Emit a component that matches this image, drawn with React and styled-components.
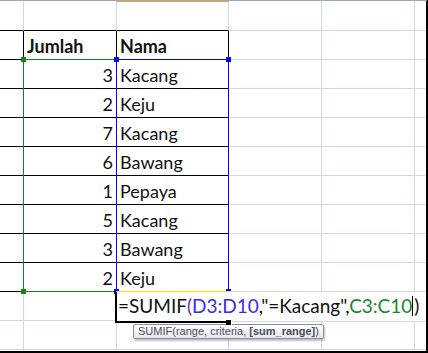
import React from 'react'
import styled, { createGlobalStyle } from 'styled-components'

const GRID = '#d0d7e5'
const GREEN = '#17861a'
const BLUE = '#0000ff'

const data = [
    [3, 'Kacang'],
    [2, 'Keju'],
    [7, 'Kacang'],
    [6, 'Bawang'],
    [1, 'Pepaya'],
    [5, 'Kacang'],
    [3, 'Bawang'],
    [2, 'Keju'],
]

const ROWS = 13
const COLS = 6

const cellText = (r, c) => {
    if (r === 1 && c === 1) return 'Jumlah'
    if (r === 1 && c === 2) return 'Nama'
    if (r >= 2 && r <= 9 && c >= 1 && c <= 2) return data[r - 2][c - 1]
    return ''
}

// coloured outline Excel draws round a range used in the formula
const RangeMark = ({ color, left, width }) => (
    <Range $color={color} $left={left} $width={width}>
        <Corner $color={color} $top $left />
        <Corner $color={color} $top />
        <Corner $color={color} $left />
        <Corner $color={color} />
    </Range>
)

const App = () => {
    const cells = []
    for (let r = 0; r < ROWS; r++) {
        for (let c = 0; c < COLS; c++) {
            cells.push(
                <Cell
                    key={r + '-' + c}
                    $darkBottom={r <= 9 && c <= 2}
                    $darkRight={r >= 1 && r <= 9 && c <= 2}
                    $noRight={c === COLS - 1}
                    $noBottom={r === ROWS - 1}
                    $bold={r === 1}
                    $right={r >= 2 && c === 1}
                >
                    {cellText(r, c)}
                </Cell>
            )
        }
    }

    return (
        <>
            <GlobalStyle />
            <Sheet>
                {cells}
                <HeaderMark />
                <RangeMark color={GREEN} left={23} width={94} />
                <RangeMark color={BLUE} left={116} width={113} />
                <Editor>
                    <Formula>
                        =SUMIF<Paren>(</Paren>
                        <Ref $color="#3a2cf0">D3:D10</Ref>
                        ,"=Kacang",
                        <Ref $color="#178a2a">C3:C10</Ref>
                        <Caret />)
                    </Formula>
                    <FillHandle />
                </Editor>
                <Tip>
                    SUMIF(range, criteria, <b>[sum_range]</b>)
                </Tip>
            </Sheet>
        </>
    )
}

export default App

const GlobalStyle = createGlobalStyle`
    html, body {
        margin: 0;
        padding: 0;
        background: #fff;
    }
`

const Sheet = styled.div`
    position: relative;
    box-sizing: border-box;
    width: 428px;
    height: 353px;
    overflow: hidden;
    background: #fff;
    border-top: 1px solid #98a9bb;
    border-right: 2px solid #000;
    border-bottom: 2px solid #000;
    display: grid;
    grid-template-columns: 24px 93px 112px 93px 93px 1fr;
    grid-template-rows: 30px repeat(11, 29px) 1fr;
    font-family: Lato, "Open Sans", sans-serif;
    font-size: 18px;
    color: #111;
`

const Cell = styled.div`
    box-sizing: border-box;
    display: flex;
    align-items: flex-end;
    justify-content: ${p => (p.$right ? 'flex-end' : 'flex-start')};
    padding: 0 3px 2px 3px;
    line-height: 22px;
    font-weight: ${p => (p.$bold ? 700 : 400)};
    white-space: nowrap;
    border-right: ${p => (p.$noRight ? 'none' : `1px solid ${p.$darkRight ? '#000' : GRID}`)};
    border-bottom: ${p => (p.$noBottom ? 'none' : `1px solid ${p.$darkBottom ? '#000' : GRID}`)};
`

const HeaderMark = styled.div`
    position: absolute;
    left: 116px;
    top: -1px;
    width: 113px;
    height: 2px;
    background: #f2a04a;
`

const Range = styled.div`
    position: absolute;
    box-sizing: border-box;
    top: 58px;
    left: ${p => p.$left}px;
    width: ${p => p.$width}px;
    height: 233px;
    border: 1px solid ${p => p.$color};
`

const Corner = styled.span`
    position: absolute;
    width: 5px;
    height: 5px;
    background: ${p => p.$color};
    ${p => (p.$top ? 'top: -3px;' : 'bottom: -3px;')}
    ${p => (p.$left ? 'left: -3px;' : 'right: -3px;')}
`

const Editor = styled.div`
    position: absolute;
    box-sizing: border-box;
    left: 115px;
    top: 290px;
    width: 311px;
    height: 31px;
    background: #fff;
    border-left: 2px solid #000;
    border-top: 1px solid ${GRID};
    border-bottom: 1px solid ${GRID};
    display: flex;
    align-items: flex-end;

    /* top edge of the active cell and its thick lower edge */
    &::before {
        content: '';
        position: absolute;
        left: 0;
        top: -1px;
        width: 112px;
        height: 1px;
        background: #f0e400;
    }

    &::after {
        content: '';
        position: absolute;
        left: -2px;
        bottom: -2px;
        width: 112px;
        height: 2px;
        background: #000;
    }
`

const Formula = styled.div`
    padding: 0 0 3px 1px;
    font-size: 19px;
    line-height: 24px;
    white-space: nowrap;
    color: #111;
`

const Paren = styled.span`
    color: #7a2f98;
`

const Ref = styled.span`
    color: ${p => p.$color};
`

const Caret = styled.span`
    display: inline-block;
    width: 1px;
    height: 20px;
    margin: 0 1px -3px 0;
    background: #000;
`

const FillHandle = styled.span`
    position: absolute;
    left: 109px;
    bottom: -4px;
    width: 5px;
    height: 5px;
    background: #000;
    border-right: 1px solid #fff;
    z-index: 1;
`

const Tip = styled.div`
    position: absolute;
    box-sizing: border-box;
    left: 133px;
    top: 323px;
    height: 15px;
    padding: 0 4px;
    font-family: "Liberation Sans", Arial, sans-serif;
    font-size: 11px;
    line-height: 13px;
    color: #4d4d55;
    white-space: nowrap;
    background: linear-gradient(#ffffff, #e6e7ef);
    border: 1px solid #8b8f99;
    border-radius: 2px;
    box-shadow: 1px 2px 2px rgba(0, 0, 0, 0.25);

    & b {
        font-weight: 700;
    }
`
